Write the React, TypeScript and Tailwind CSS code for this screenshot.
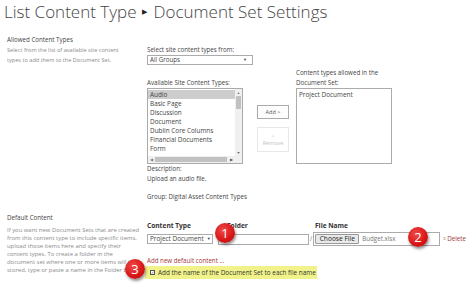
import React from "react";

const items = ["Audio", "Basic Page", "Discussion", "Document", "Dublin Core Columns", "Financial Documents", "Form"];

function Badge({ n, className }: { n: string; className: string }) {
  return (
    <div
      className={`absolute w-[20px] h-[20px] rounded-full flex items-center justify-center text-white text-[13px] leading-none shadow-[1px_2px_3px_rgba(0,0,0,0.45)] bg-[radial-gradient(circle_at_40%_35%,#f04a4a_0%,#d71414_60%,#b00d0d_100%)] ${className}`}
    >
      {n}
    </div>
  );
}

export default function App() {
  return (
    <div className="relative w-[474px] h-[284px] overflow-hidden bg-white text-[#444] font-['Open_Sans',sans-serif]">
      {/* Title */}
      <div className="flex items-center pl-[4px] h-[24px] text-[17px] font-light text-[#444]">
        <span>List Content Type</span>
        <span className="mx-[6px] text-[7px] text-[#222]">▶</span>
        <span>Document Set Settings</span>
      </div>

      {/* Allowed content types */}
      <div className="flex mt-[11px]">
        <div className="w-[147px] shrink-0 pl-[7px] text-[6.2px] whitespace-nowrap">
          <div className="leading-[9px] text-[#444]">Allowed Content Types</div>
          <div className="mt-[1px] leading-[10px] text-[5.6px] text-[#8a8a8a]">
            Select from the list of available site content
            <br />
            types to add them to the Document Set.
          </div>
        </div>
        <div className="pt-[10px] text-[6.2px]">
          <div className="leading-[10px]">Select site content types from:</div>
          <div className="w-[106px] h-[10px] border border-[#ababab] flex items-center justify-between px-[2px] leading-none">
            <span>All Groups</span>
            <span className="text-[4px] mr-[3px]">▼</span>
          </div>

          <div className="flex mt-[3px]">
            {/* Available list */}
            <div className="w-[96px] pt-[10px]">
              <div className="leading-[10px]">Available Site Content Types:</div>
              <div className="h-[76px] border border-[#ababab] flex flex-col">
                <div className="flex flex-1">
                  <div className="flex-1 pt-[1px]">
                    {items.map((it, i) => (
                      <div
                        key={it}
                        className={`h-[9px] leading-[9px] pl-[2px] text-[6.4px] ${i === 0 ? "bg-[#cdcdcd]" : ""}`}
                      >
                        {it}
                      </div>
                    ))}
                  </div>
                  <div className="w-[7px] bg-[#f0f0f0] flex flex-col items-center">
                    <span className="text-[3.5px] text-[#777] leading-[7px]">▲</span>
                    <div className="w-[5px] h-[13px] bg-[#c1c1c1]" />
                    <div className="flex-1" />
                    <span className="text-[3.5px] text-[#555] leading-[7px]">▼</span>
                  </div>
                </div>
                <div className="h-[7px] bg-[#f0f0f0] flex items-center">
                  <span className="text-[3.5px] text-[#777] w-[7px] text-center">◀</span>
                  <div className="w-[72px] h-[5px] bg-[#c1c1c1]" />
                  <div className="flex-1" />
                  <span className="text-[3.5px] text-[#555] w-[7px] text-center">▶</span>
                  <div className="w-[7px] h-[7px] bg-[#f0f0f0]" />
                </div>
              </div>
            </div>

            {/* Buttons */}
            <div className="ml-[14px] w-[32px] pt-[37px] flex flex-col">
              <div className="h-[14px] border border-[#ababab] bg-[#fdfdfd] flex items-center justify-center text-[5.5px] text-[#555]">
                Add &gt;
              </div>
              <div className="mt-[8px] h-[25px] border border-[#e8e8e8] flex flex-col items-center justify-center text-[5.5px] text-[#c4c4c4] leading-[7px]">
                <span>&lt;</span>
                <span>Remove</span>
              </div>
            </div>

            {/* Allowed list */}
            <div className="ml-[7px] w-[96px]">
              <div className="leading-[10px]">
                Content types allowed in the
                <br />
                Document Set:
              </div>
              <div className="h-[76px] border border-[#ababab] pl-[2px] pt-[1px] leading-[9px] text-[6.4px]">
                Project Document
              </div>
            </div>
          </div>

          <div className="leading-[10px]">
            Description:
            <br />
            Upload an audio file.
          </div>
          <div className="mt-[8px] leading-[10px]">Group: Digital Asset Content Types</div>
        </div>
      </div>

      {/* Default content */}
      <div className="flex mt-[11px]">
        <div className="w-[147px] shrink-0 pl-[7px] text-[6.2px] whitespace-nowrap">
          <div className="leading-[9px] text-[#444]">Default Content</div>
          <div className="mt-[4px] leading-[8px] text-[5.9px] text-[#8a8a8a]">
            If you want new Document Sets that are created
            <br />
            from this content type to include specific items,
            <br />
            upload those items here and specify their
            <br />
            content types. To create a folder in the
            <br />
            document set where one or more items will be
            <br />
            stored, type or paste a name in the Folder box.
          </div>
        </div>
        <div className="pt-[8px] text-[6.2px]">
          <div className="flex font-bold text-[6.6px] leading-[9px] text-[#333]">
            <span className="w-[80px]">Content Type</span>
            <span className="w-[88px]">Folder</span>
            <span>File Name</span>
          </div>
          <div className="flex items-center mt-[2px] h-[14px] whitespace-nowrap">
            <div className="w-[66px] h-[10px] border border-[#ababab] flex items-center pl-[2px] leading-none text-[6.4px]">
              Project Document <span className="ml-[3px] text-[4px]">▼</span>
            </div>
            <div className="ml-[5px] w-[91px] h-[11px] border border-[#ababab]" />
            <span className="mx-[1px] text-[#777]">/</span>
            <div className="w-[127px] h-[14px] border border-[#ababab] flex items-center pl-[1px]">
              <div className="w-[44px] h-[10px] bg-[#e9e9e9] border border-[#999] rounded-[1px] flex items-center justify-center text-[6.6px] text-[#222] leading-none">
                Choose File
              </div>
              <span className="ml-[3px] text-[#777] text-[6.2px]">Budget.xlsx</span>
            </div>
            <span className="ml-[3px] text-[#999] text-[5px]">≡</span>
            <span className="ml-[1px] text-[#a4373a]">Delete</span>
          </div>
          <div className="mt-[10px] leading-[10px] text-[#a4373a]">Add new default content ...</div>
          <div className="-ml-[2px] w-[172px] h-[13px] bg-[#f1f38a] flex items-center pl-[5px] whitespace-nowrap">
            <div className="w-[5px] h-[5px] border border-[#555] bg-white flex items-center justify-center text-[4px] leading-none">
              ✓
            </div>
            <span className="ml-[3px] text-[#333] text-[6.4px]">Add the name of the Document Set to each file name</span>
          </div>
        </div>
      </div>

      <Badge n="1" className="left-[215px] top-[223px]" />
      <Badge n="2" className="left-[408px] top-[227px]" />
      <Badge n="3" className="left-[125px] top-[259px]" />
    </div>
  );
}
